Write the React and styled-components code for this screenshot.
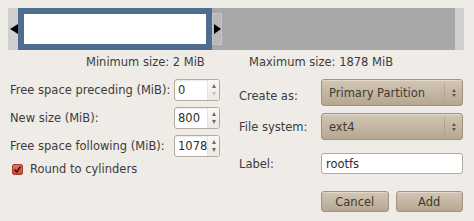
import styled, { createGlobalStyle } from "styled-components";

const GlobalStyle = createGlobalStyle`
  html, body {
    margin: 0;
    padding: 0;
    background: #efebe6;
  }
  body {
    font-family: "DejaVu Sans", "Liberation Sans", sans-serif;
    font-size: 11.5px;
    color: #3c3c3c;
  }
`;

const Dialog = styled.div`
  width: 474px;
  height: 221px;
  box-sizing: border-box;
  padding: 8px 0 0 0;
  background: #efebe6;
`;

const Bar = styled.div`
  display: flex;
  height: 42px;
  margin: 0 10px 0 8px;
`;

const Strip = styled.div`
  width: ${(p) => p.$w}px;
  background: #cfcfcf;
  display: flex;
  align-items: center;
  justify-content: ${(p) => p.$justify || "center"};
`;

const Arrow = styled.span`
  width: 0;
  height: 0;
  border-top: 5px solid transparent;
  border-bottom: 5px solid transparent;
  ${(p) =>
    p.$dir === "left"
      ? "border-right: 8px solid #000;"
      : "border-left: 7px solid #000;"}
`;

const Partition = styled.div`
  width: 194px;
  box-sizing: border-box;
  border: 6px solid #4d6d8f;
  background: #fff;
`;

const Handle = styled.div`
  width: 10px;
  background: #a8a8a8;
  display: flex;
  align-items: center;
`;

const HandleBox = styled.div`
  width: 10px;
  height: 32px;
  box-sizing: border-box;
  border: 1px solid #c6c6c6;
  background: #b8b8b8;
  display: flex;
  align-items: center;
  padding-left: 1px;
`;

const Unallocated = styled.div`
  flex: 1;
  background: #a8a8a8;
`;

const SizeRow = styled.div`
  display: grid;
  grid-template-columns: 249px auto;
  height: 22px;
  align-items: center;
  margin-top: 1px;
`;

const SizeText = styled.span`
  padding-left: ${(p) => p.$left || 0}px;
  white-space: nowrap;
`;

const Columns = styled.div`
  display: flex;
  margin-top: 6px;
`;

const LeftCol = styled.div`
  width: 229px;
  padding-left: 10px;
  box-sizing: border-box;
  display: grid;
  grid-template-columns: 164px 46px;
  grid-auto-rows: 22px;
  row-gap: 6px;
  align-items: center;
`;

const RightCol = styled.div`
  padding-left: 10px;
  display: grid;
  grid-template-columns: 82px 142px;
  align-items: center;
`;

const Label = styled.span`
  white-space: nowrap;
`;

const SpinBox = styled.div`
  height: 22px;
  box-sizing: border-box;
  border: 1px solid #b3ab9f;
  border-radius: 3px;
  background: #fff;
  display: flex;
  align-items: center;
  box-shadow: inset 0 1px 1px rgba(0, 0, 0, 0.08);
`;

const SpinValue = styled.span`
  flex: 1;
  padding-left: 3px;
  color: #2e2e2e;
`;

const SpinArrows = styled.div`
  width: 12px;
  height: 100%;
  box-sizing: border-box;
  border-left: 1px solid #e6e2dc;
  background: linear-gradient(#faf9f7, #ece8e2);
  display: flex;
  flex-direction: column;
  justify-content: center;
  align-items: center;
  gap: 4px;
  border-radius: 0 2px 2px 0;
`;

const Tri = styled.span`
  width: 0;
  height: 0;
  border-left: 2.5px solid transparent;
  border-right: 2.5px solid transparent;
  ${(p) =>
    p.$up
      ? `border-bottom: 4px solid ${p.$off ? "#c8c3bb" : "#6e6a64"};`
      : `border-top: 4px solid ${p.$off ? "#c8c3bb" : "#6e6a64"};`}
`;

const CheckRow = styled.label`
  grid-column: 1 / 3;
  display: flex;
  align-items: center;
  gap: 7px;
  padding-left: 2px;
  margin-top: -10px;
`;

const CheckBox = styled.span`
  width: 11px;
  height: 11px;
  box-sizing: border-box;
  border-radius: 2px;
  border: 1px solid #a8382c;
  background: linear-gradient(#e8745f, #c9483a);
  display: flex;
  align-items: center;
  justify-content: center;
`;

const Combo = styled.div`
  height: 27px;
  box-sizing: border-box;
  border: 1px solid #9f927e;
  border-radius: 3px;
  background: linear-gradient(#d2c6b4, #b6a791);
  display: flex;
  align-items: center;
  box-shadow: inset 0 1px 0 rgba(255, 255, 255, 0.35);
  margin-bottom: ${(p) => p.$mb || 0}px;
`;

const ComboText = styled.span`
  flex: 1;
  padding-left: 7px;
  color: #3e3a34;
`;

const ComboArrows = styled.div`
  width: 17px;
  height: 20px;
  border-left: 1px solid #b2a590;
  display: flex;
  flex-direction: column;
  justify-content: center;
  align-items: center;
  gap: 2px;
`;

const ComboTri = styled.span`
  width: 0;
  height: 0;
  border-left: 2.5px solid transparent;
  border-right: 2.5px solid transparent;
  ${(p) =>
    p.$up ? "border-bottom: 3px solid #5e564b;" : "border-top: 3px solid #5e564b;"}
`;

const Entry = styled.div`
  height: 21px;
  box-sizing: border-box;
  border: 1px solid #b3ab9f;
  border-radius: 3px;
  background: #fff;
  display: flex;
  align-items: center;
  padding-left: 4px;
  color: #2e2e2e;
  margin-top: 13px;
`;

const EntryLabel = styled(Label)`
  margin-top: 13px;
`;

const Buttons = styled.div`
  grid-column: 2;
  display: flex;
  gap: 7px;
  margin-top: 17px;
`;

const Button = styled.button`
  width: ${(p) => p.$w}px;
  height: 21px;
  border: 1px solid #9f927e;
  border-radius: 3px;
  background: linear-gradient(#d2c6b4, #b6a791);
  font-family: "DejaVu Sans", "Liberation Sans", sans-serif;
  font-size: 11.5px;
  color: #3e3a34;
  padding: 0;
  box-shadow: inset 0 1px 0 rgba(255, 255, 255, 0.35);
`;

const Spin = ({ value, downOff, upOff }) => (
  <SpinBox>
    <SpinValue>{value}</SpinValue>
    <SpinArrows>
      <Tri $up $off={upOff} />
      <Tri $off={downOff} />
    </SpinArrows>
  </SpinBox>
);

const Select = ({ text, mb }) => (
  <Combo $mb={mb}>
    <ComboText>{text}</ComboText>
    <ComboArrows>
      <ComboTri $up />
      <ComboTri />
    </ComboArrows>
  </Combo>
);

export default function App() {
  return (
    <Dialog>
      <GlobalStyle />
      <Bar>
        <Strip $w={10} $justify="flex-end">
          <Arrow $dir="left" />
        </Strip>
        <Partition />
        <Handle>
          <HandleBox>
            <Arrow $dir="right" />
          </HandleBox>
        </Handle>
        <Unallocated />
        <Strip $w={9} />
      </Bar>
      <SizeRow>
        <SizeText $left={86}>Minimum size: 2 MiB</SizeText>
        <SizeText>Maximum size: 1878 MiB</SizeText>
      </SizeRow>
      <Columns>
        <LeftCol>
          <Label>Free space preceding (MiB):</Label>
          <Spin value="0" downOff />
          <Label>New size (MiB):</Label>
          <Spin value="800" />
          <Label>Free space following (MiB):</Label>
          <Spin value="1078" />
          <CheckRow>
            <CheckBox>
              <svg width="9" height="9" viewBox="0 0 9 9">
                <path d="M1.5 4.5 L3.8 7 L7.5 1.5" fill="none" stroke="#3a0f0a" strokeWidth="1.6" />
              </svg>
            </CheckBox>
            Round to cylinders
          </CheckRow>
        </LeftCol>
        <RightCol>
          <Label>Create as:</Label>
          <Select text="Primary Partition" mb={7} />
          <Label>File system:</Label>
          <Select text="ext4" />
          <EntryLabel>Label:</EntryLabel>
          <Entry>rootfs</Entry>
          <Buttons>
            <Button $w={70}>Cancel</Button>
            <Button $w={70}>Add</Button>
          </Buttons>
        </RightCol>
      </Columns>
    </Dialog>
  );
}
